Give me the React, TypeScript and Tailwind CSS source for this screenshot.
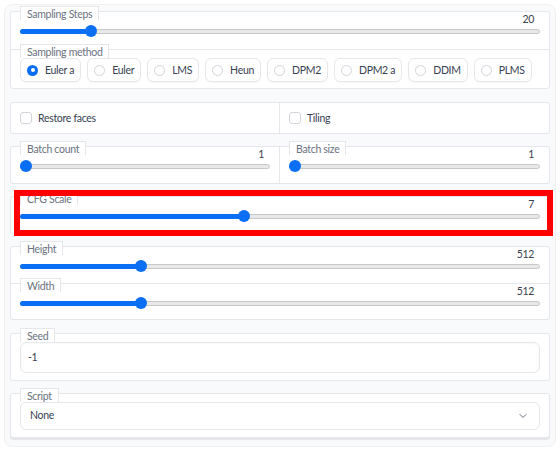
import React from "react";
import { ChevronDown } from "lucide-react";

const font = { fontFamily: "Lato, 'Noto Sans', sans-serif" };

const txt = "text-[10.5px] tracking-[-0.3px]";

function Label({ children }: { children: React.ReactNode }) {
  return (
    <span className={`block h-[14px] border-x border-t border-[#e5e7eb] bg-white px-[6px] leading-[14px] whitespace-nowrap text-[#6b7280] ${txt}`}>
      {children}
    </span>
  );
}

function Slider({ pct }: { pct: number }) {
  return (
    <div className="relative mt-[5px] flex h-[12px] items-center">
      <div className="relative h-[5px] w-full rounded-full border border-[#c8c8c8] bg-[#e8e8e8]">
        <div
          className="absolute -top-px -left-px h-[5px] rounded-full bg-[#0b6ff5]"
          style={{ width: `calc(${pct} * (100% - 12px) + 6px)` }}
        />
      </div>
      <div
        className="absolute top-0 h-[12px] w-[12px] rounded-full bg-[#0b6ff5]"
        style={{ left: `calc(${pct} * (100% - 12px))` }}
      />
    </div>
  );
}

function SliderField({
  label,
  value,
  pct,
  h = "h-[37px]",
  extra = "",
}: {
  label: string;
  value: string;
  pct: number;
  h?: string;
  extra?: string;
}) {
  return (
    <div className={`flex flex-col ${h} px-[9px] ${extra}`}>
      <div className="-mt-[6px] flex h-[14px] shrink-0 items-start justify-between">
        <Label>{label}</Label>
        <span className={`mt-[6px] pr-[6px] leading-[14px] text-[#374151] ${txt}`}>{value}</span>
      </div>
      <Slider pct={pct} />
    </div>
  );
}

const methods = ["Euler a", "Euler", "LMS", "Heun", "DPM2", "DPM2 a", "DDIM", "PLMS"];

function Radio({ label, checked }: { label: string; checked?: boolean }) {
  return (
    <div className="flex h-[24px] shrink-0 items-center gap-[7px] rounded-[6px] border border-[#e5e7eb] bg-white pr-[6px] pl-[6px] shadow-[0_1px_1px_rgba(0,0,0,0.03)]">
      {checked ? (
        <span className="flex h-[11px] w-[11px] items-center justify-center rounded-full bg-[#0b6ff5]">
          <span className="h-[4px] w-[4px] rounded-full bg-white" />
        </span>
      ) : (
        <span className="h-[11px] w-[11px] rounded-full border border-[#d1d5db] bg-white" />
      )}
      <span className={`leading-none whitespace-nowrap text-[#374151] ${txt}`}>{label}</span>
    </div>
  );
}

function Checkbox({ label }: { label: string }) {
  return (
    <div className="flex h-full items-center gap-[6px] pl-[9px]">
      <span className="h-[12px] w-[12px] rounded-[3px] border border-[#d1d5db] bg-white" />
      <span className={`leading-none text-[#374151] ${txt}`}>{label}</span>
    </div>
  );
}

const panel = "shrink-0 rounded-[3px] border border-[#e5e7eb] bg-white";

function LabelRow({ children }: { children: React.ReactNode }) {
  return <div className="-mt-[6px] flex h-[14px] shrink-0 items-start">{children}</div>;
}

export default function App() {
  return (
    <div className="h-[452px] w-[560px] bg-white p-[4px]" style={font}>
      <div className="flex h-[443px] flex-col rounded-[8px] border border-[#f1f1f1] bg-[#f9fafb] px-[5px] pt-[6px]">
        {/* sampling */}
        <div className={panel}>
          <SliderField label="Sampling Steps" value="20" pct={19 / 149} />
          <div className="flex h-[39px] flex-col border-t border-[#e5e7eb] px-[9px]">
            <LabelRow>
              <Label>Sampling method</Label>
            </LabelRow>
            <div className="flex gap-[6px]">
              {methods.map((m, i) => (
                <Radio key={m} label={m} checked={i === 0} />
              ))}
            </div>
          </div>
        </div>

        {/* checkboxes */}
        <div className={`${panel} mt-[13px] grid h-[32px] grid-cols-2 divide-x divide-[#e5e7eb]`}>
          <Checkbox label="Restore faces" />
          <Checkbox label="Tiling" />
        </div>

        {/* batch */}
        <div className={`${panel} mt-[12px] grid grid-cols-2 divide-x divide-[#e5e7eb]`}>
          <SliderField label="Batch count" value="1" pct={0} h="h-[36px]" />
          <SliderField label="Batch size" value="1" pct={0} h="h-[36px]" />
        </div>

        {/* cfg */}
        <div className={`${panel} relative mt-[12px]`}>
          <SliderField label="CFG Scale" value="7" pct={6 / 14} h="h-[36px]" />
          <div className="pointer-events-none absolute -top-[7px] -right-[4px] -bottom-[3px] left-[3px] z-10 border-[6px] border-[#ff0000]" />
        </div>

        {/* size */}
        <div className={`${panel} mt-[12px]`}>
          <SliderField label="Height" value="512" pct={448 / 1984} h="h-[36px]" />
          <SliderField label="Width" value="512" pct={448 / 1984} h="h-[36px]" extra="border-t border-[#e5e7eb]" />
        </div>

        {/* seed */}
        <div className={`${panel} mt-[13px] flex h-[48px] flex-col px-[9px]`}>
          <LabelRow>
            <Label>Seed</Label>
          </LabelRow>
          <div className={`flex h-[31px] shrink-0 items-center rounded-[6px] border border-[#e5e7eb] bg-white px-[7px] text-[#374151] shadow-[inset_0_1px_2px_rgba(0,0,0,0.03)] ${txt}`}>
            -1
          </div>
        </div>

        {/* script */}
        <div className={`${panel} mt-[12px] flex h-[45px] flex-col px-[9px] shadow-[0_2px_1px_rgba(0,0,0,0.08)]`}>
          <LabelRow>
            <Label>Script</Label>
          </LabelRow>
          <div className={`flex h-[28px] shrink-0 items-center justify-between rounded-[6px] border border-[#e5e7eb] bg-white pr-[10px] pl-[9px] text-[#374151] ${txt}`}>
            <span>None</span>
            <ChevronDown size={12} strokeWidth={2} className="text-[#6b7280]" />
          </div>
        </div>
      </div>
    </div>
  );
}
